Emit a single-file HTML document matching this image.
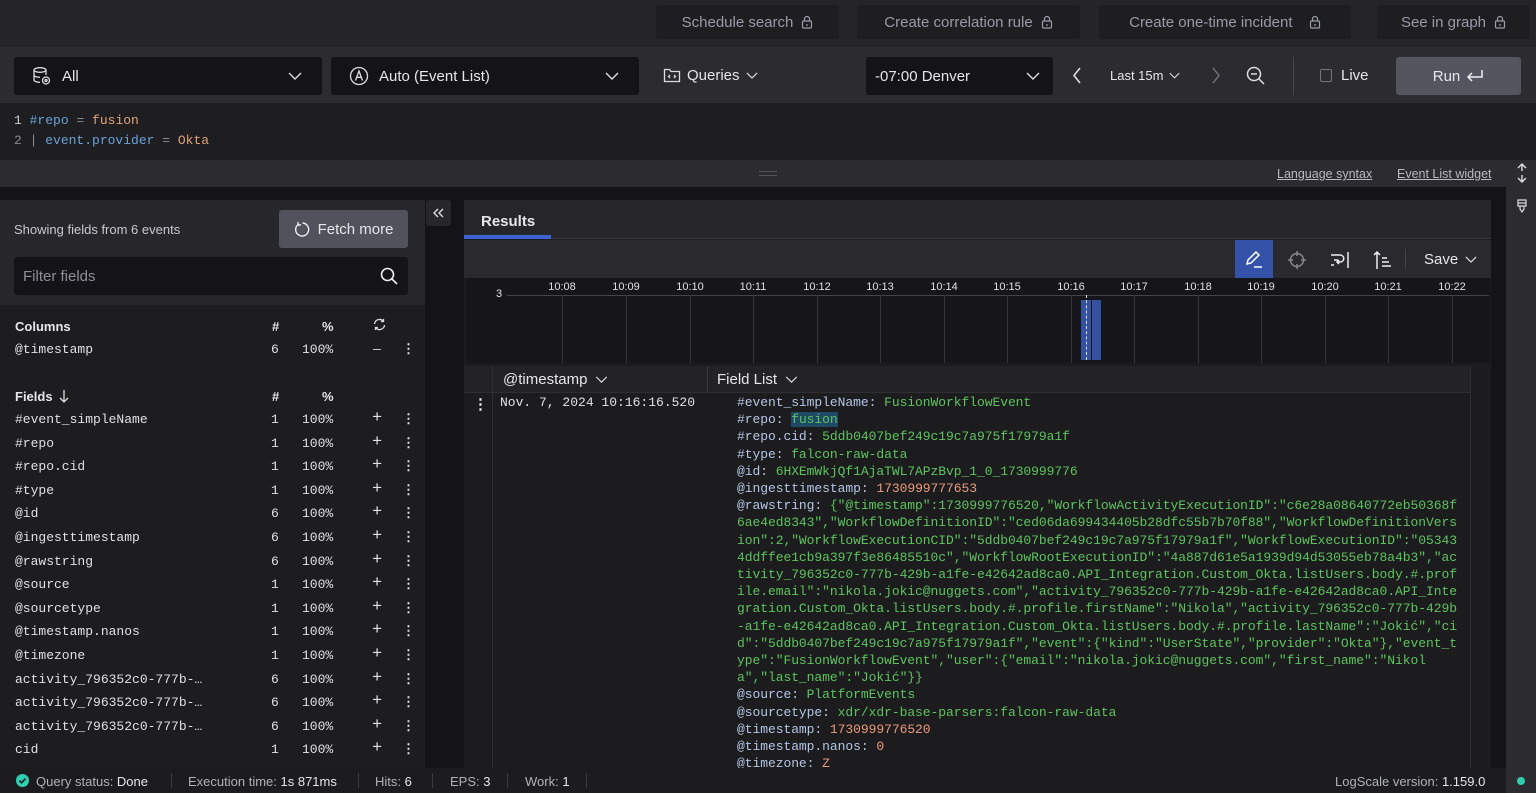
<!DOCTYPE html>
<html><head><meta charset="utf-8">
<style>
*{box-sizing:border-box;margin:0;padding:0}
body{width:1536px;height:793px;overflow:hidden;background:#141418;font-family:"Liberation Sans",sans-serif;color:#e6e6ea;position:relative}
.a{position:absolute}
.mono{font-family:"Liberation Mono",monospace}
.tb{background:#1e1e21;color:#9a9aa8;font-size:15px;height:34px;top:5px;border-radius:3px;display:flex;align-items:center;justify-content:center;gap:8px}
.dd{background:#141418;border-radius:3px;height:38px;top:57px;display:flex;align-items:center;font-size:15px;color:#e6e6ea}
.fr{position:absolute;left:0;width:425px;height:23px;font-size:13px;font-family:"Liberation Mono",monospace;color:#e0e0e4}
.fr span{position:absolute;top:0}
.fl{font-family:"Liberation Mono",monospace;font-size:13px;letter-spacing:-0.06px;line-height:17.2px;white-space:pre;color:#5ec35e}
.k{color:#b4c6e4}.o{color:#ec9a7c}
.tick{position:absolute;top:3px;font-size:11px;color:#e0e0e4;transform:translateX(-50%)}
.vl{position:absolute;top:17px;width:1px;height:68px;background:#333338}
.cv{display:inline-block;vertical-align:middle}
</style></head><body>
<svg width="0" height="0" style="position:absolute"><defs><symbol id="ch" viewBox="0 0 14 8"><path d="M1 1l6 6 6-6" fill="none" stroke="currentColor" stroke-width="1.4"/></symbol><symbol id="lk" viewBox="0 0 12 14"><g fill="none" stroke="#9a9aa8" stroke-width="1.2"><rect x="1.5" y="6" width="9" height="7" rx="1"/><path d="M3.5 6V4a2.5 2.5 0 015 0v2M6 9v2"/></g></symbol></defs></svg>
<!-- top bar -->
<div class="a" style="left:0;top:0;width:1536px;height:47px;background:#252528"></div>
<div class="a tb" style="left:656px;width:183px">Schedule search <svg width="12" height="14"><use href="#lk"/></svg></div>
<div class="a tb" style="left:857px;width:223px">Create correlation rule <svg width="12" height="14"><use href="#lk"/></svg></div>
<div class="a tb" style="left:1099px;width:252px">Create one-time incident &nbsp;<svg width="12" height="14"><use href="#lk"/></svg></div>
<div class="a tb" style="left:1377px;width:153px">See in graph <svg width="12" height="14"><use href="#lk"/></svg></div>
<!-- toolbar -->
<div class="a" style="left:0;top:47px;width:1536px;height:56px;background:#2b2b30"></div>
<div class="a dd" style="left:14px;width:308px;padding-left:18px"><svg width="20" height="20" viewBox="0 0 20 20" fill="none" stroke="#ddd" stroke-width="1.3"><ellipse cx="8" cy="4" rx="6" ry="2.3"/><path d="M2 4v10c0 1.2 2.5 2.3 6 2.3M14 4v5M2 9c0 1.2 2.5 2.3 6 2.3"/><circle cx="14" cy="14.5" r="3.5"/><circle cx="14" cy="14.5" r="1"/></svg><span style="margin-left:10px">All</span><svg class="a" style="right:20px;top:15px;color:#ddd" width="14" height="8"><use href="#ch"/></svg></div>
<div class="a dd" style="left:331px;width:308px;padding-left:18px"><svg width="20" height="20" viewBox="0 0 20 20" fill="none" stroke="#ddd" stroke-width="1.3"><circle cx="10" cy="10" r="8.5"/><path d="M6.5 14.5L10 5l3.5 9.5M7.7 11.3h4.6"/></svg><span style="margin-left:10px">Auto (Event List)</span><svg class="a" style="right:20px;top:15px;color:#ddd" width="14" height="8"><use href="#ch"/></svg></div>
<div class="a" style="left:663px;top:66px;font-size:15px;display:flex;align-items:center;gap:6px"><svg width="18" height="18" viewBox="0 0 18 18" fill="none" stroke="#ddd" stroke-width="1.3"><path d="M1.5 3.5h5l1.5 2h8.5v10h-15z"/><path d="M7 9l-1.5 1.5L7 12M11 9l1.5 1.5L11 12"/></svg>Queries <svg style="color:#ddd" width="12" height="7" viewBox="0 0 14 8"><use href="#ch"/></svg></div>
<div class="a dd" style="left:866px;width:187px;padding-left:9px">-07:00 Denver<svg class="a" style="right:13px;top:15px;color:#ddd" width="14" height="8"><use href="#ch"/></svg></div>
<svg class="a" style="left:1072px;top:67px" width="10" height="17" viewBox="0 0 10 17" fill="none" stroke="#ddd" stroke-width="1.6"><path d="M8 1L2 8.5 8 16"/></svg>
<div class="a" style="left:1110px;top:68px;font-size:13px;color:#e6e6ea;display:flex;align-items:center;gap:6px">Last 15m <svg style="color:#ddd" width="11" height="7" viewBox="0 0 14 8"><use href="#ch"/></svg></div>
<svg class="a" style="left:1211px;top:67px" width="10" height="17" viewBox="0 0 10 17" fill="none" stroke="#777" stroke-width="1.4"><path d="M2 1l6 7.5L2 16"/></svg>
<svg class="a" style="left:1246px;top:66px" width="19" height="19" viewBox="0 0 19 19" fill="none" stroke="#ddd" stroke-width="1.5"><circle cx="8" cy="8" r="6.5"/><path d="M5 8h6M13 13l5 5"/></svg>
<div class="a" style="left:1293px;top:57px;width:1px;height:38px;background:#45454c"></div>
<div class="a" style="left:1320px;top:69px;width:12px;height:13px;border:1px solid #777;border-radius:2px"></div>
<div class="a" style="left:1341px;top:67px;font-size:15px">Live</div>
<div class="a" style="left:1396px;top:57px;width:125px;height:38px;background:#55555f;border-radius:3px;display:flex;align-items:center;justify-content:center;gap:6px;font-size:15px">Run <svg width="18" height="14" viewBox="0 0 18 14" fill="none" stroke="#eee" stroke-width="1.5"><path d="M16 1v7H2M6 4L2 8l4 4"/></svg></div>
<!-- editor -->
<div class="a" style="left:0;top:103px;width:1536px;height:57px;background:#1e1e21"></div>
<div class="a mono" style="left:14px;top:111px;font-size:13px;line-height:20px;white-space:pre;color:#8a8a92"><span style="color:#ccc">1</span> <span style="color:#6aa1d8">#repo</span> = <span style="color:#e0a27a">fusion</span>
2 | <span style="color:#6aa1d8">event.provider</span> = <span style="color:#e0a27a">Okta</span></div>
<div class="a" style="left:0;top:160px;width:1536px;height:27px;background:#2b2b30"></div>
<div class="a" style="left:759px;top:171px;width:18px;height:5px;border-top:1px solid #555;border-bottom:1px solid #555"></div>
<div class="a" style="left:1277px;top:167px;font-size:12.5px;color:#b8b8c0;text-decoration:underline">Language syntax</div>
<div class="a" style="left:1397px;top:167px;font-size:12.5px;color:#b8b8c0;text-decoration:underline">Event List widget</div>
<svg class="a" style="left:1516px;top:163px" width="12" height="20" viewBox="0 0 12 20" fill="none" stroke="#ddd" stroke-width="1.4"><path d="M6 1v7M2 5l4-4 4 4M6 12v7M2 15l4 4 4-4"/></svg>
<!-- right strip -->
<div class="a" style="left:1506px;top:187px;width:30px;height:581px;background:#2b2b30"></div>
<svg class="a" style="left:1516px;top:199px" width="12" height="14" viewBox="0 0 12 14" fill="none" stroke="#ddd" stroke-width="1.2"><path d="M2 1h8v6H2zM2 4h8M4 7v3l2 3 2-3V7"/></svg>
<!-- left panel -->
<div class="a" style="left:0;top:200px;width:425px;height:105px;background:#27272b"></div>
<div class="a" style="left:0;top:305px;width:425px;height:463px;background:#1d1d20"></div>
<div class="a" style="left:14px;top:222px;font-size:13px;color:#c8c8d0">Showing fields from 6 events</div>
<div class="a" style="left:279px;top:210px;width:129px;height:38px;background:#52525c;border-radius:3px;display:flex;align-items:center;justify-content:center;gap:7px;font-size:15px"><svg width="17" height="17" viewBox="0 0 17 17" fill="none" stroke="#eee" stroke-width="1.4"><path d="M4 3.5A6.5 6.5 0 1 0 8.5 2M4 1v3h3"/></svg>Fetch more</div>
<div class="a" style="left:14px;top:257px;width:394px;height:38px;background:#141418;border-radius:3px"></div>
<div class="a" style="left:23px;top:268px;font-size:15px;color:#8e8e98">Filter fields</div>
<svg class="a" style="left:380px;top:267px" width="18" height="18" viewBox="0 0 18 18" fill="none" stroke="#eee" stroke-width="1.6"><circle cx="7.5" cy="7.5" r="6"/><path d="M12 12l5 5"/></svg>
<div class="a" style="left:426px;top:200px;width:25px;height:26px;background:#27272b;border-radius:3px"></div>
<svg class="a" style="left:432px;top:208px" width="13" height="10" viewBox="0 0 13 10" fill="none" stroke="#ddd" stroke-width="1.4"><path d="M6 1L2 5l4 4M11 1L7 5l4 4"/></svg>
<div class="a" style="left:15px;top:319px;font-size:13px;font-weight:bold">Columns</div>
<div class="a" style="left:272px;top:319px;font-size:13px;font-weight:bold">#</div>
<div class="a" style="left:322px;top:319px;font-size:13px;font-weight:bold">%</div>
<svg class="a" style="left:372px;top:318px" width="15" height="13" viewBox="0 0 15 13" fill="none" stroke="#ddd" stroke-width="1.3"><path d="M2.5 6a5 5 0 019-2.5M12.5 7a5 5 0 01-9 2.5M11.5 1v2.5H9M3.5 12V9.5H6"/></svg>
<div class="fr" style="top:342px"><span style="left:15px">@timestamp</span><span style="left:271px">6</span><span style="left:302px">100%</span><span style="left:373px">—</span><span style="left:402px;font-weight:bold">⋮</span></div>
<div class="a" style="left:15px;top:389px;font-size:13px;font-weight:bold;display:flex;align-items:center;gap:6px">Fields <svg width="10" height="13" viewBox="0 0 10 13" fill="none" stroke="#ddd" stroke-width="1.3"><path d="M5 0v12M1 8l4 4 4-4"/></svg></div>
<div class="a" style="left:272px;top:389px;font-size:13px;font-weight:bold">#</div>
<div class="a" style="left:322px;top:389px;font-size:13px;font-weight:bold">%</div>
<div class="a" style="left:0;top:412px;width:425px;height:356px;overflow:hidden">
<div class="fr" style="top:0"><span style="left:15px">#event_simpleName</span><span style="left:271px">1</span><span style="left:302px">100%</span><span style="left:372px;font-size:17px;top:-3px">+</span><span style="left:402px;font-weight:bold">⋮</span></div>
<div class="fr" style="top:23.6px"><span style="left:15px">#repo</span><span style="left:271px">1</span><span style="left:302px">100%</span><span style="left:372px;font-size:17px;top:-3px">+</span><span style="left:402px;font-weight:bold">⋮</span></div>
<div class="fr" style="top:47.2px"><span style="left:15px">#repo.cid</span><span style="left:271px">1</span><span style="left:302px">100%</span><span style="left:372px;font-size:17px;top:-3px">+</span><span style="left:402px;font-weight:bold">⋮</span></div>
<div class="fr" style="top:70.8px"><span style="left:15px">#type</span><span style="left:271px">1</span><span style="left:302px">100%</span><span style="left:372px;font-size:17px;top:-3px">+</span><span style="left:402px;font-weight:bold">⋮</span></div>
<div class="fr" style="top:94.4px"><span style="left:15px">@id</span><span style="left:271px">6</span><span style="left:302px">100%</span><span style="left:372px;font-size:17px;top:-3px">+</span><span style="left:402px;font-weight:bold">⋮</span></div>
<div class="fr" style="top:118px"><span style="left:15px">@ingesttimestamp</span><span style="left:271px">6</span><span style="left:302px">100%</span><span style="left:372px;font-size:17px;top:-3px">+</span><span style="left:402px;font-weight:bold">⋮</span></div>
<div class="fr" style="top:141.6px"><span style="left:15px">@rawstring</span><span style="left:271px">6</span><span style="left:302px">100%</span><span style="left:372px;font-size:17px;top:-3px">+</span><span style="left:402px;font-weight:bold">⋮</span></div>
<div class="fr" style="top:165.2px"><span style="left:15px">@source</span><span style="left:271px">1</span><span style="left:302px">100%</span><span style="left:372px;font-size:17px;top:-3px">+</span><span style="left:402px;font-weight:bold">⋮</span></div>
<div class="fr" style="top:188.8px"><span style="left:15px">@sourcetype</span><span style="left:271px">1</span><span style="left:302px">100%</span><span style="left:372px;font-size:17px;top:-3px">+</span><span style="left:402px;font-weight:bold">⋮</span></div>
<div class="fr" style="top:212.4px"><span style="left:15px">@timestamp.nanos</span><span style="left:271px">1</span><span style="left:302px">100%</span><span style="left:372px;font-size:17px;top:-3px">+</span><span style="left:402px;font-weight:bold">⋮</span></div>
<div class="fr" style="top:236px"><span style="left:15px">@timezone</span><span style="left:271px">1</span><span style="left:302px">100%</span><span style="left:372px;font-size:17px;top:-3px">+</span><span style="left:402px;font-weight:bold">⋮</span></div>
<div class="fr" style="top:259.6px"><span style="left:15px">activity_796352c0-777b-…</span><span style="left:271px">6</span><span style="left:302px">100%</span><span style="left:372px;font-size:17px;top:-3px">+</span><span style="left:402px;font-weight:bold">⋮</span></div>
<div class="fr" style="top:283.2px"><span style="left:15px">activity_796352c0-777b-…</span><span style="left:271px">6</span><span style="left:302px">100%</span><span style="left:372px;font-size:17px;top:-3px">+</span><span style="left:402px;font-weight:bold">⋮</span></div>
<div class="fr" style="top:306.8px"><span style="left:15px">activity_796352c0-777b-…</span><span style="left:271px">6</span><span style="left:302px">100%</span><span style="left:372px;font-size:17px;top:-3px">+</span><span style="left:402px;font-weight:bold">⋮</span></div>
<div class="fr" style="top:330.4px"><span style="left:15px">cid</span><span style="left:271px">1</span><span style="left:302px">100%</span><span style="left:372px;font-size:17px;top:-3px">+</span><span style="left:402px;font-weight:bold">⋮</span></div>
</div>
<!-- results panel -->
<div class="a" style="left:464px;top:200px;width:1027px;height:568px;background:#1c1c1f"></div>
<div class="a" style="left:464px;top:200px;width:1027px;height:39px;background:#26262a;border-bottom:1px solid #38383e"></div>
<div class="a" style="left:481px;top:213px;font-size:15px;font-weight:bold">Results</div>
<div class="a" style="left:464px;top:235px;width:87px;height:4px;background:#3c64d0"></div>
<div class="a" style="left:464px;top:240px;width:1027px;height:38px;background:#2a2a2e"></div>
<div class="a" style="left:1235px;top:240px;width:38px;height:38px;background:#3453a8"></div>
<svg class="a" style="left:1244px;top:249px" width="20" height="20" viewBox="0 0 20 20" fill="none" stroke="#fff" stroke-width="1.5"><path d="M3 15l1-4 8-8 3 3-8 8zM10 18h8"/></svg>
<svg class="a" style="left:1287px;top:250px" width="20" height="20" viewBox="0 0 20 20" fill="none" stroke="#888" stroke-width="1.5"><circle cx="10" cy="10" r="6.5"/><path d="M10 1v5M10 14v5M1 10h5M14 10h5"/></svg>
<svg class="a" style="left:1330px;top:250px" width="20" height="20" viewBox="0 0 20 20" fill="none" stroke="#eee" stroke-width="1.5"><path d="M1 5h9M4 10h4M1 15h3M10 5c5 0 5 7 0 7l-3 0M9 10l-2 2 2 2M18 2v16"/></svg>
<svg class="a" style="left:1373px;top:250px" width="20" height="20" viewBox="0 0 20 20" fill="none" stroke="#eee" stroke-width="1.5"><path d="M4 19V2M1 5l3-3 3 3M9 8h5M9 12h7M9 16h9"/></svg>
<div class="a" style="left:1405px;top:249px;width:1px;height:20px;background:#444"></div>
<div class="a" style="left:1424px;top:251px;font-size:15px;display:flex;align-items:center;gap:7px">Save <svg style="color:#ddd" width="12" height="7" viewBox="0 0 14 8"><use href="#ch"/></svg></div>
<!-- chart -->
<div class="a" style="left:466px;top:278px;width:1024px;height:85px;background:#16161a">
<div class="a" style="left:41px;top:17px;width:982px;height:1px;background:#444"></div>
<div class="a" style="left:30px;top:10px;font-size:11px">3</div>
<div class="tick" style="left:96px">10:08</div><div class="vl" style="left:96px"></div>
<div class="tick" style="left:160px">10:09</div><div class="vl" style="left:160px"></div>
<div class="tick" style="left:224px">10:10</div><div class="vl" style="left:224px"></div>
<div class="tick" style="left:287px">10:11</div><div class="vl" style="left:287px"></div>
<div class="tick" style="left:351px">10:12</div><div class="vl" style="left:351px"></div>
<div class="tick" style="left:414px">10:13</div><div class="vl" style="left:414px"></div>
<div class="tick" style="left:478px">10:14</div><div class="vl" style="left:478px"></div>
<div class="tick" style="left:541px">10:15</div><div class="vl" style="left:541px"></div>
<div class="tick" style="left:605px">10:16</div><div class="vl" style="left:605px"></div>
<div class="tick" style="left:668px">10:17</div><div class="vl" style="left:668px"></div>
<div class="tick" style="left:732px">10:18</div><div class="vl" style="left:732px"></div>
<div class="tick" style="left:795px">10:19</div><div class="vl" style="left:795px"></div>
<div class="tick" style="left:859px">10:20</div><div class="vl" style="left:859px"></div>
<div class="tick" style="left:922px">10:21</div><div class="vl" style="left:922px"></div>
<div class="tick" style="left:986px">10:22</div><div class="vl" style="left:986px"></div>
<div class="a" style="left:615px;top:22px;width:20px;height:60px;background:#3451a0"></div>
<div class="a" style="left:625px;top:22px;width:1px;height:60px;background:#16161a"></div>
<div class="a" style="left:620px;top:17px;width:0;height:65px;border-left:1px dashed #ddd"></div>
</div>
<!-- table -->
<div class="a" style="left:464px;top:366px;width:1006px;height:26px;background:#232327"></div>
<div class="a" style="left:492px;top:366px;width:1px;height:402px;background:#2e2e33"></div>
<div class="a" style="left:707px;top:366px;width:1px;height:26px;background:#38383e"></div>
<div class="a" style="left:464px;top:392px;width:1006px;height:1px;background:#2e2e33"></div>
<div class="a" style="left:1470px;top:366px;width:1px;height:402px;background:#2e2e33"></div>
<div class="a" style="left:503px;top:371px;font-size:15px;display:flex;align-items:center;gap:8px">@timestamp <svg style="color:#ddd" width="13" height="7" viewBox="0 0 14 8"><use href="#ch"/></svg></div>
<div class="a" style="left:717px;top:371px;font-size:15px;display:flex;align-items:center;gap:8px">Field List <svg style="color:#ddd" width="13" height="7" viewBox="0 0 14 8"><use href="#ch"/></svg></div>
<div class="a" style="left:473px;top:395px;font-size:15px;font-weight:bold">⋮</div>
<div class="a mono" style="left:500px;top:395px;font-size:13px;color:#e0e0e4">Nov. 7, 2024 10:16:16.520</div>
<div class="a fl" style="left:737px;top:394px;height:374px;overflow:hidden"><span class="k">#event_simpleName:</span> FusionWorkflowEvent
<span class="k">#repo:</span> <span style="background:#1e4a66">fusion</span>
<span class="k">#repo.cid:</span> 5ddb0407bef249c19c7a975f17979a1f
<span class="k">#type:</span> falcon-raw-data
<span class="k">@id:</span> 6HXEmWkjQf1AjaTWL7APzBvp_1_0_1730999776
<span class="k">@ingesttimestamp:</span> <span class="o">1730999777653</span>
<span class="k">@rawstring:</span> {"@timestamp":1730999776520,"WorkflowActivityExecutionID":"c6e28a08640772eb50368f
6ae4ed8343","WorkflowDefinitionID":"ced06da699434405b28dfc55b7b70f88","WorkflowDefinitionVers
ion":2,"WorkflowExecutionCID":"5ddb0407bef249c19c7a975f17979a1f","WorkflowExecutionID":"05343
4ddffee1cb9a397f3e86485510c","WorkflowRootExecutionID":"4a887d61e5a1939d94d53055eb78a4b3","ac
tivity_796352c0-777b-429b-a1fe-e42642ad8ca0.API_Integration.Custom_Okta.listUsers.body.#.prof
ile.email":"nikola.jokic@nuggets.com","activity_796352c0-777b-429b-a1fe-e42642ad8ca0.API_Inte
gration.Custom_Okta.listUsers.body.#.profile.firstName":"Nikola","activity_796352c0-777b-429b
-a1fe-e42642ad8ca0.API_Integration.Custom_Okta.listUsers.body.#.profile.lastName":"Jokić","ci
d":"5ddb0407bef249c19c7a975f17979a1f","event":{"kind":"UserState","provider":"Okta"},"event_t
ype":"FusionWorkflowEvent","user":{"email":"nikola.jokic@nuggets.com","first_name":"Nikol
a","last_name":"Jokić"}}
<span class="k">@source:</span> PlatformEvents
<span class="k">@sourcetype:</span> xdr/xdr-base-parsers:falcon-raw-data
<span class="k">@timestamp:</span> <span class="o">1730999776520</span>
<span class="k">@timestamp.nanos:</span> <span class="o">0</span>
<span class="k">@timezone:</span> <span class="o">Z</span></div>
<!-- status bar -->
<div class="a" style="left:0;top:768px;width:1536px;height:25px;background:#1c1c1f;font-size:13px;color:#b0b0b8">
<svg class="a" style="left:16px;top:6px" width="13" height="13" viewBox="0 0 13 13"><circle cx="6.5" cy="6.5" r="6.5" fill="#2fd0b0"/><path d="M3.5 6.7l2 2 4-4" stroke="#1c1c1f" stroke-width="1.6" fill="none"/></svg>
<div class="a" style="left:36px;top:6px">Query status: <span style="color:#e6e6ea">Done</span></div>
<div class="a" style="left:171px;top:5px;width:1px;height:15px;background:#3a3a40"></div>
<div class="a" style="left:188px;top:6px">Execution time: <span style="color:#e6e6ea">1s 871ms</span></div>
<div class="a" style="left:358px;top:5px;width:1px;height:15px;background:#3a3a40"></div>
<div class="a" style="left:375px;top:6px">Hits: <span style="color:#e6e6ea">6</span></div>
<div class="a" style="left:432px;top:5px;width:1px;height:15px;background:#3a3a40"></div>
<div class="a" style="left:450px;top:6px">EPS: <span style="color:#e6e6ea">3</span></div>
<div class="a" style="left:507px;top:5px;width:1px;height:15px;background:#3a3a40"></div>
<div class="a" style="left:525px;top:6px">Work: <span style="color:#e6e6ea">1</span></div>
<div class="a" style="left:586px;top:5px;width:1px;height:15px;background:#3a3a40"></div>
<div class="a" style="left:1335px;top:6px">LogScale version: <span style="color:#e6e6ea">1.159.0</span></div>
<div class="a" style="left:1506px;top:0;width:30px;height:25px;background:#2b2b30"></div>
<div class="a" style="left:1517px;top:9px;width:8px;height:8px;border-radius:50%;background:#2fd0b0"></div>
</div>
</body></html>
